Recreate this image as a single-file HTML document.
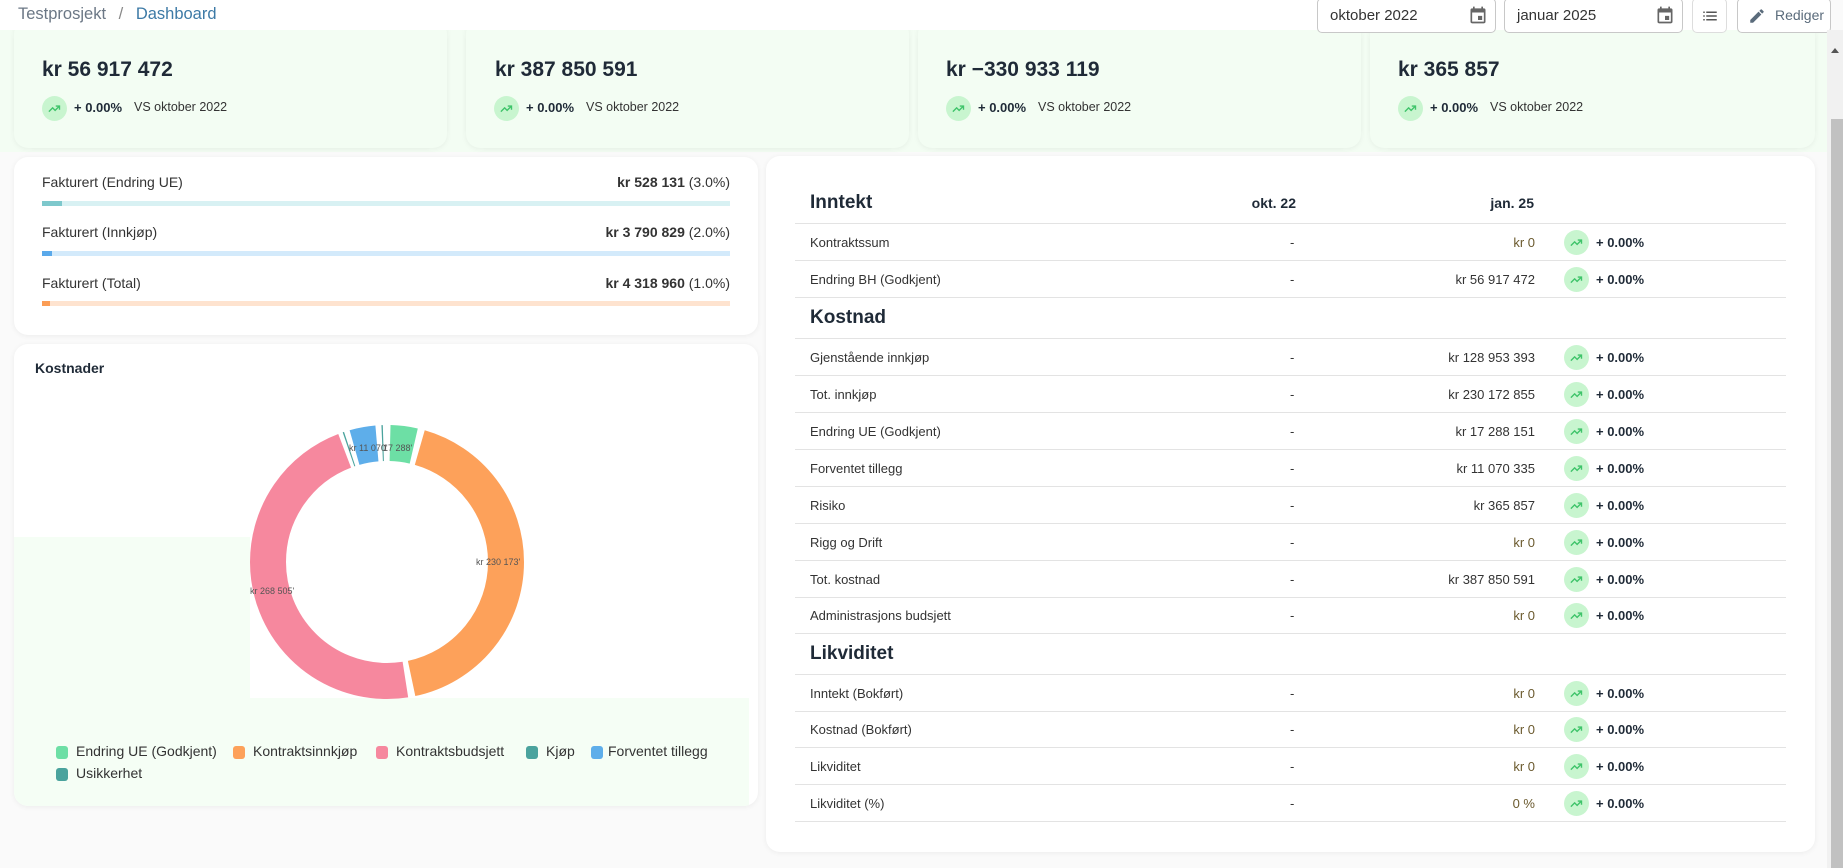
<!DOCTYPE html>
<html><head><meta charset="utf-8"><style>
*{margin:0;padding:0;box-sizing:border-box}
body{width:1843px;height:868px;overflow:hidden;background:#fafafa;font-family:"Liberation Sans",sans-serif;color:#212b36;position:relative}
.a{position:absolute}
.card{position:absolute;background:#fff;border-radius:14px;box-shadow:0 1px 6px rgba(0,0,0,.06)}
.gc{background:#f3fdf3}
.big{position:absolute;font-size:21px;font-weight:bold;color:#1f2a37}
.ic{position:absolute;width:25px;height:25px;border-radius:50%;background:#c8f5cf}
.ic svg{position:absolute;left:5px;top:5px}
.pct{position:absolute;font-size:13px;font-weight:bold;color:#1f2a37}
.vs{position:absolute;font-size:12.5px;color:#333}
.fl{position:absolute;font-size:14px;color:#333}
.fr{position:absolute;font-size:14px;color:#333;text-align:right;width:300px}
.bar{position:absolute;height:5px;left:42px;width:688px}
.row{position:absolute;left:795px;width:991px;border-bottom:1px solid #e3e3e3}
.lbl{position:absolute;left:15px;font-size:13px;color:#333}
.dash{position:absolute;left:495px;font-size:13px;color:#333}
.val{position:absolute;right:251px;font-size:13px;color:#333;text-align:right}
.h{position:absolute;left:15px;font-size:19px;font-weight:bold;color:#1f2a37}
.leg{position:absolute;font-size:14px;color:#333}
.sq{position:absolute;width:12px;height:13px;border-radius:3px}
.btn{position:absolute;top:-2px;height:35px;border:1px solid #c8c8c8;border-radius:5px;background:#fff}
</style></head><body>
<svg width="0" height="0" style="position:absolute"><defs><symbol id="tr" viewBox="0 0 24 24"><path d="M3 17l6-6 4 4 7-7M14 8h6v6" fill="none" stroke="#3fc46a" stroke-width="2.2"/></symbol></defs></svg>

<div class="a gc" style="left:0;top:30px;width:1827px;height:122px"></div>

<div class="card gc" style="left:14px;top:20px;width:433px;height:128px"></div>
<div class="card gc" style="left:466px;top:20px;width:443px;height:128px"></div>
<div class="card gc" style="left:918px;top:20px;width:443px;height:128px"></div>
<div class="card gc" style="left:1370px;top:20px;width:445px;height:128px"></div>

<div class="a" style="left:0;top:0;width:1827px;height:30px;background:#fff"></div>
<div class="a" style="left:18px;top:5px;font-size:16.5px;color:#6b7785">Testprosjekt <span style="margin:0 8px;color:#888">/</span> <span style="color:#3d7aa6">Dashboard</span></div>
<div class="btn" style="left:1317px;width:179px"><span class="a" style="left:12px;top:8px;font-size:15px;color:#333">oktober 2022</span><svg class="a" style="left:150px;top:6px" width="20" height="20" viewBox="0 0 24 24"><path d="M19 4h-1V2h-2v2H8V2H6v2H5a2 2 0 0 0-2 2v14a2 2 0 0 0 2 2h14a2 2 0 0 0 2-2V6a2 2 0 0 0-2-2zm0 16H5V9h14zM12 13h5v5h-5z" fill="#666"/></svg></div>
<div class="btn" style="left:1504px;width:179px"><span class="a" style="left:12px;top:8px;font-size:15px;color:#333">januar 2025</span><svg class="a" style="left:150px;top:6px" width="20" height="20" viewBox="0 0 24 24"><path d="M19 4h-1V2h-2v2H8V2H6v2H5a2 2 0 0 0-2 2v14a2 2 0 0 0 2 2h14a2 2 0 0 0 2-2V6a2 2 0 0 0-2-2zm0 16H5V9h14zM12 13h5v5h-5z" fill="#666"/></svg></div>
<div class="btn" style="left:1692px;width:35px;border-color:#ddd"><svg class="a" style="left:8px;top:8px" width="18" height="18" viewBox="0 0 24 24"><path d="M3 6h2v2H3zm4 0h14v2H7zM3 11h2v2H3zm4 0h14v2H7zM3 16h2v2H3zm4 0h14v2H7z" fill="#555"/></svg></div>
<div class="btn" style="left:1737px;width:94px"><svg class="a" style="left:10px;top:8px" width="18" height="18" viewBox="0 0 24 24"><path d="M3 17.25V21h3.75L17.8 9.94l-3.75-3.75zM20.7 7.04a1 1 0 0 0 0-1.41l-2.34-2.34a1 1 0 0 0-1.41 0l-1.83 1.83 3.75 3.75z" fill="#5a6b7b"/></svg><span class="a" style="left:37px;top:8px;font-size:14px;color:#5a6b7b">Rediger</span></div>

<div class="big" style="left:42px;top:58px">kr 56 917 472</div>
<div class="big" style="left:495px;top:58px">kr 387 850 591</div>
<div class="big" style="left:946px;top:58px">kr −330 933 119</div>
<div class="big" style="left:1398px;top:58px">kr 365 857</div>
<div class="ic" style="left:42px;top:96px"><svg width="15" height="15"><use href="#tr"/></svg></div>
<div class="ic" style="left:494px;top:96px"><svg width="15" height="15"><use href="#tr"/></svg></div>
<div class="ic" style="left:946px;top:96px"><svg width="15" height="15"><use href="#tr"/></svg></div>
<div class="ic" style="left:1398px;top:96px"><svg width="15" height="15"><use href="#tr"/></svg></div>
<div class="pct" style="left:74px;top:100px">+ 0.00%</div><div class="vs" style="left:134px;top:100px">VS oktober 2022</div>
<div class="pct" style="left:526px;top:100px">+ 0.00%</div><div class="vs" style="left:586px;top:100px">VS oktober 2022</div>
<div class="pct" style="left:978px;top:100px">+ 0.00%</div><div class="vs" style="left:1038px;top:100px">VS oktober 2022</div>
<div class="pct" style="left:1430px;top:100px">+ 0.00%</div><div class="vs" style="left:1490px;top:100px">VS oktober 2022</div>

<div class="card" style="left:14px;top:157px;width:744px;height:178px"></div>
<div class="fl" style="left:42px;top:174px">Fakturert (Endring UE)</div><div class="fr" style="left:430px;top:174px"><b>kr 528 131</b> (3.0%)</div>
<div class="bar" style="top:201px;background:#d8f1f3"><div style="width:20px;height:5px;background:#7ec8cc"></div></div>
<div class="fl" style="left:42px;top:224px">Fakturert (Innkjøp)</div><div class="fr" style="left:430px;top:224px"><b>kr 3 790 829</b> (2.0%)</div>
<div class="bar" style="top:251px;background:#d3eafb"><div style="width:10px;height:5px;background:#5aa9ea"></div></div>
<div class="fl" style="left:42px;top:275px">Fakturert (Total)</div><div class="fr" style="left:430px;top:275px"><b>kr 4 318 960</b> (1.0%)</div>
<div class="bar" style="top:301px;background:#fee3cf"><div style="width:8px;height:5px;background:#fb9d55"></div></div>

<div class="card" style="left:14px;top:344px;width:744px;height:462px;overflow:hidden">
 <div class="a" style="left:0;top:193px;width:236px;height:200px;background:#f5fef5"></div>
 <div class="a" style="left:0;top:354px;width:735px;height:110px;background:#f5fef5"></div>
</div>
<div class="a" style="left:35px;top:360px;font-size:14px;font-weight:bold;color:#1f2a37">Kostnader</div>
<svg class="a" style="left:237px;top:412px" width="300" height="300" viewBox="0 0 300 300">
 <g transform="rotate(-90 150 150)" fill="none" stroke-width="36">
  <circle cx="150" cy="150" r="119" stroke="#6ddfa5" stroke-dasharray="23.9 800" stroke-dashoffset="-3.1"/>
  <circle cx="150" cy="150" r="119" stroke="#fda15a" stroke-dasharray="315.7 800" stroke-dashoffset="-33.2"/>
  <circle cx="150" cy="150" r="119" stroke="#f6889e" stroke-dasharray="348.9 800" stroke-dashoffset="-355.2"/>
  <circle cx="150" cy="150" r="119" stroke="#4aa39d" stroke-dasharray="1.2 800" stroke-dashoffset="-708.2"/>
  <circle cx="150" cy="150" r="119" stroke="#5eaeea" stroke-dasharray="22.8 800" stroke-dashoffset="-714.5"/>
  <circle cx="150" cy="150" r="119" stroke="#4aa39d" stroke-dasharray="1.2 800" stroke-dashoffset="-742.5"/>
 </g>
</svg>
<div class="a" style="left:476px;top:557px;font-size:9px;color:#555">kr 230 173'</div>
<div class="a" style="left:250px;top:586px;font-size:9px;color:#555">kr 268 505'</div>
<div class="a" style="left:349px;top:443px;font-size:9px;color:#555">kr 11 070'</div>
<div class="a" style="left:383px;top:443px;font-size:9px;color:#555">17 288'</div>
<div class="sq" style="left:56px;top:746px;background:#6ddfa5"></div><div class="leg" style="left:76px;top:743px">Endring UE (Godkjent)</div>
<div class="sq" style="left:233px;top:746px;background:#fda15a"></div><div class="leg" style="left:253px;top:743px">Kontraktsinnkjøp</div>
<div class="sq" style="left:376px;top:746px;background:#f6889e"></div><div class="leg" style="left:396px;top:743px">Kontraktsbudsjett</div>
<div class="sq" style="left:526px;top:746px;background:#4aa39d"></div><div class="leg" style="left:546px;top:743px">Kjøp</div>
<div class="sq" style="left:591px;top:746px;background:#5eaeea"></div><div class="leg" style="left:608px;top:743px">Forventet tillegg</div>
<div class="sq" style="left:56px;top:768px;background:#4aa39d"></div><div class="leg" style="left:76px;top:765px">Usikkerhet</div>

<div class="card" style="left:766px;top:156px;width:1049px;height:696px"></div>
<div class="row" style="top:182px;height:42px"><div class="h" style="top:10px">Inntekt</div><div class="a" style="right:490px;top:13px;font-size:14px;font-weight:bold;color:#1f2a37">okt. 22</div><div class="a" style="right:252px;top:13px;font-size:14px;font-weight:bold;color:#1f2a37">jan. 25</div></div>
<div id="rows"></div>
<script>
var R=[["h","",224],["Kontraktssum","kr 0",224],["Endring BH (Godkjent)","kr 56 917 472",261],["h","Kostnad",298],["Gjenstående innkjøp","kr 128 953 393",339],["Tot. innkjøp","kr 230 172 855",376],["Endring UE (Godkjent)","kr 17 288 151",413],["Forventet tillegg","kr 11 070 335",450],["Risiko","kr 365 857",487],["Rigg og Drift","kr 0",524],["Tot. kostnad","kr 387 850 591",561],["Administrasjons budsjett","kr 0",597],["h","Likviditet",634],["Inntekt (Bokført)","kr 0",675],["Kostnad (Bokført)","kr 0",711],["Likviditet","kr 0",748],["Likviditet (%)","0 %",785]];
var s="";
for(var i=1;i<R.length;i++){var r=R[i];
 if(r[0]=="h"){s+='<div class="row" style="top:'+r[2]+'px;height:41px"><div class="h" style="top:9px">'+r[1]+'</div></div>';}
 else{var c=(r[1]=="kr 0"||r[1]=="0 %")?"#6b5a2e":"#333";
 s+='<div class="row" style="top:'+r[2]+'px;height:37px"><div class="lbl" style="top:11px">'+r[0]+'</div><div class="dash" style="top:11px">-</div><div class="val" style="top:11px;color:'+c+'">'+r[1]+'</div><div class="ic" style="left:769px;top:6px"><svg width="15" height="15"><use href="#tr"/></svg></div><div class="pct" style="left:801px;top:11px">+ 0.00%</div></div>';}
}
document.getElementById("rows").innerHTML=s;
</script>

<div class="a" style="left:1827px;top:30px;width:16px;height:838px;background:#f1f1f1"></div>
<div class="a" style="left:1831px;top:119px;width:12px;height:749px;background:#c1c1c1"></div>
<div class="a" style="left:1831px;top:48px;width:0;height:0;border-left:4px solid transparent;border-right:4px solid transparent;border-bottom:5px solid #555"></div>
</body></html>
